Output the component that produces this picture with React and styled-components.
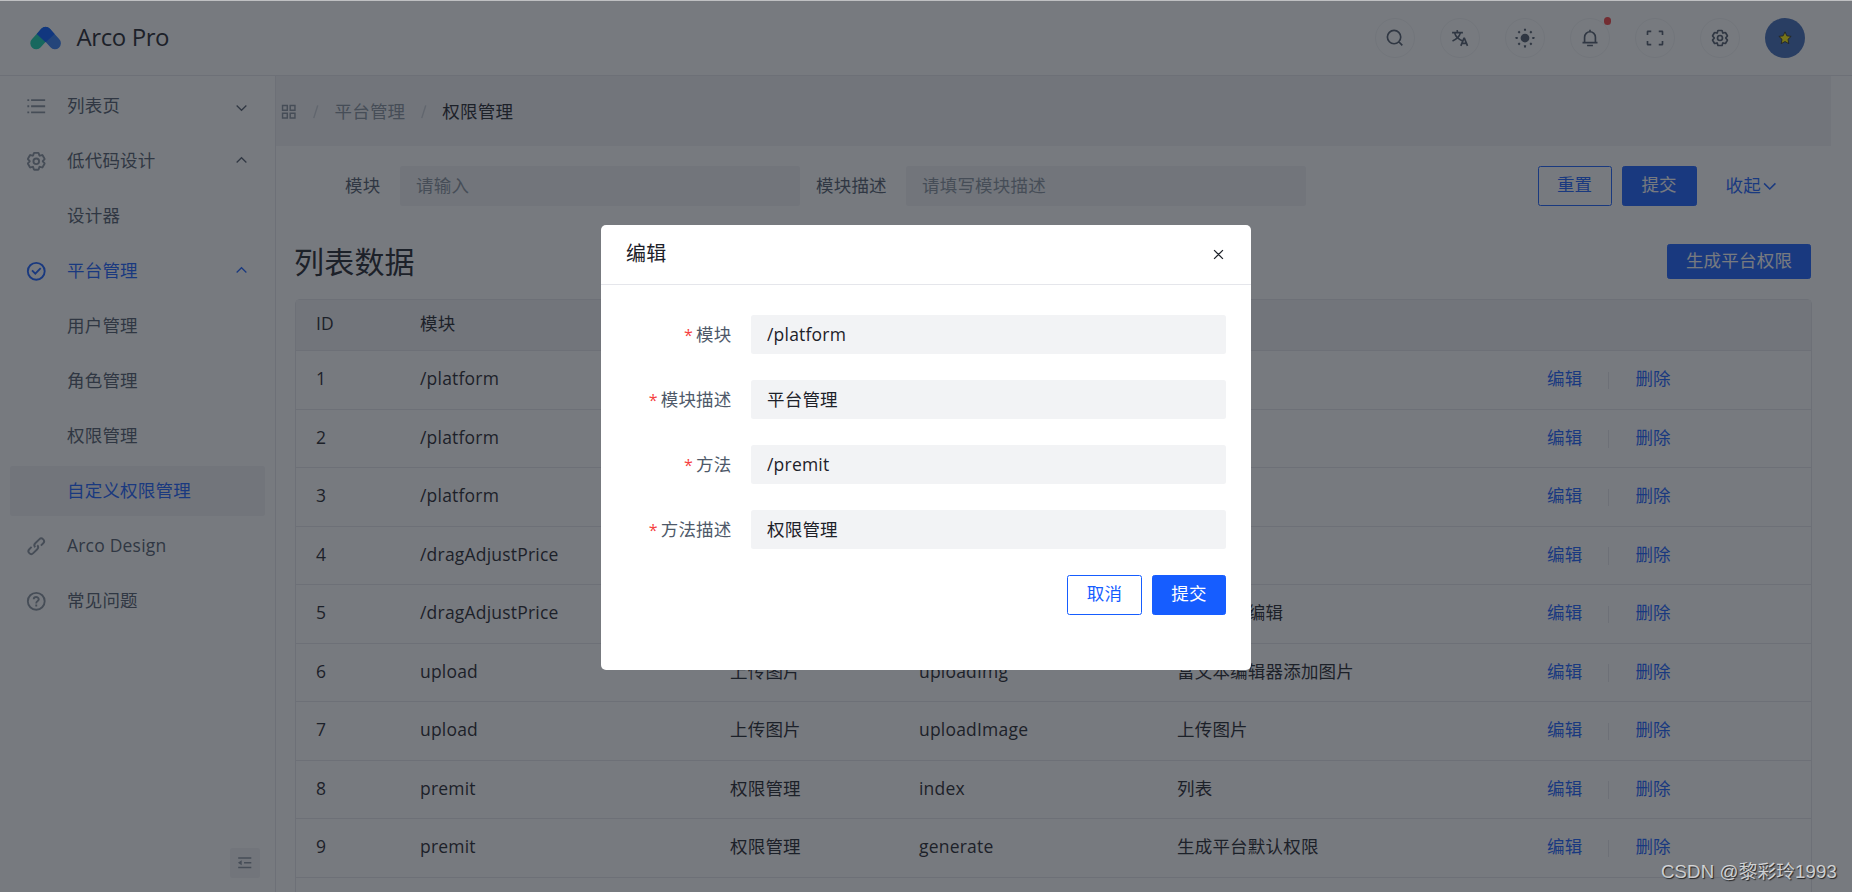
import React from "react";
import styled, { createGlobalStyle, css } from "styled-components";

const color = {
  primary: "#165dff",
  text1: "#1d2129",
  text2: "#4e5969",
  text3: "#86909c",
  text4: "#c9cdd4",
  border: "#e5e6eb",
  fill: "#f2f3f5",
  danger: "#f53f3f",
};

const GlobalStyle = createGlobalStyle`
  *, *::before, *::after { box-sizing: border-box; }
  html, body { margin: 0; padding: 0; overflow: hidden; }
  body, input, button {
    font-family: "Open Sans", "Noto Sans CJK SC", sans-serif;
    font-size: 17.5px;
    line-height: 27.5px;
    letter-spacing: 0.2px;
  }
  body { color: ${color.text1}; background: #fff; }
`;

/* ---------- icons ---------- */

const Svg = styled.svg`
  display: block;
  flex: none;
  width: ${(p) => p.$size}px;
  height: ${(p) => p.$size}px;
  fill: none;
  stroke: currentColor;
  stroke-width: 4;
`;

const circle = "M42 24c0 9.941-8.059 18-18 18S6 33.941 6 24 14.059 6 24 6s18 8.059 18 18Z";
const paths = {
  search: [
    "M33.072 33.071c6.248-6.248 6.248-16.379 0-22.627-6.249-6.249-16.38-6.249-22.628 0-6.248 6.248-6.248 16.379 0 22.627 6.248 6.248 16.38 6.248 22.628 0Zm0 0 8.485 8.485",
  ],
  language: [
    "m42 43-2.385-6M26 43l2.384-6m11.231 0-.795-2-4.18-10h-1.28l-4.181 10-.795 2m11.231 0h-11.23M17 5l1 5M5 11h26M11 11s1.889 7.826 6.611 12.174C22.333 27.522 30 31 30 31",
    "M25 11s-1.889 7.826-6.611 12.174C13.667 27.522 6 31 6 31",
  ],
  bell: ["M24 9c7.18 0 13 5.82 13 13v13H11V22c0-7.18 5.82-13 13-13Zm0 0V4M6 35h36m-25 7h14"],
  fullscreen: [
    "M42 17V9a1 1 0 0 0-1-1h-8M6 17V9a1 1 0 0 1 1-1h8m27 23v8a1 1 0 0 1-1 1h-8M6 31v8a1 1 0 0 0 1 1h8",
  ],
  settings: [
    "M18.797 6.732A1 1 0 0 1 19.76 6h8.48a1 1 0 0 1 .964.732l1.285 4.628a1 1 0 0 0 1.213.7l4.651-1.2a1 1 0 0 1 1.116.468l4.24 7.344a1 1 0 0 1-.153 1.2L38.193 23.3a1 1 0 0 0 0 1.402l3.364 3.427a1 1 0 0 1 .153 1.2l-4.24 7.344a1 1 0 0 1-1.116.468l-4.65-1.2a1 1 0 0 0-1.214.7l-1.285 4.628a1 1 0 0 1-.964.732h-8.48a1 1 0 0 1-.963-.732L17.51 36.64a1 1 0 0 0-1.213-.7l-4.65 1.2a1 1 0 0 1-1.116-.468l-4.24-7.344a1 1 0 0 1 .153-1.2L9.809 24.7a1 1 0 0 0 0-1.402l-3.364-3.427a1 1 0 0 1-.153-1.2l4.24-7.344a1 1 0 0 1 1.116-.468l4.65 1.2a1 1 0 0 0 1.213-.7l1.286-4.628Z",
    "M30 24a6 6 0 1 1-12 0 6 6 0 0 1 12 0Z",
  ],
  list: ["M13 24h30M5 11h4m4 26h30M13 11h30M5 24h4M5 37h4"],
  check: ["m15 22 7 7 11.5-11.5", circle],
  link: [
    "m14.1 25.414-4.95 4.95a6 6 0 0 0 8.486 8.485l8.485-8.485a6 6 0 0 0 0-8.485m7.779.707 4.95-4.95a6 6 0 1 0-8.486-8.485l-8.485 8.485a6 6 0 0 0 0 8.485",
  ],
  question: [
    circle,
    "M24.006 31v4.008m0-6.008L24 28c0-3 3-4 4.78-6.402C30.558 19.195 28.288 15 23.987 15c-4.014 0-5.382 2.548-5.388 4.514v.465",
  ],
  down: ["M39.6 17.443 24.043 33 8.487 17.443"],
  up: ["M39.6 30.557 24.043 15 8.487 30.557"],
  apps: ["M7 7h13v13H7V7ZM28 7h13v13H28V7ZM7 28h13v13H7V28ZM28 28h13v13H28V28Z"],
  slash: ["M29.506 6.502 18.493 41.498"],
  close: ["M9.857 9.858 24 24m0 0 14.142 14.142M24 24 38.142 9.858M24 24 9.857 38.142"],
  fold: ["M42 11H6M42 24H22M42 37H6"],
};

function Icon({ name, size }) {
  return (
    <Svg $size={size} viewBox="0 0 48 48" aria-hidden="true">
      {paths[name].map((d) => (
        <path key={d} d={d} />
      ))}
      {name === "fold" && (
        <path d="m13.66 26.912-4.82-3.118 4.82-3.118v6.236Z" fill="currentColor" />
      )}
    </Svg>
  );
}

function SunIcon() {
  return (
    <Svg $size={20} viewBox="0 0 48 48" aria-hidden="true">
      <g fill="currentColor" stroke="none">
        <circle cx="24" cy="24" r="10.5" />
        {[0, 45, 90, 135, 180, 225, 270, 315].map((a) => (
          <rect key={a} x="21.5" y="4.500" width="5" height="5" rx="0.5" transform={`rotate(${a} 24 24) translate(0 -3)`} />
        ))}
      </g>
    </Svg>
  );
}

const LogoSvg = styled.svg`
  display: block;
  width: 32px;
  height: 24px;
`;

function Logo() {
  return (
    <LogoSvg viewBox="0 0 32 24">
      <g fill="none" strokeLinecap="round" strokeWidth="12">
        <path d="M6.3 17.200 15.600 7" stroke="#12d2ac" />
        <path d="M24.900 17.200 15.600 7" stroke="#307af2" />
      </g>
      <path d="M6.700 7.900 11 3.100Q15.600-1.500 20.200 3.100L24.600 7.900 15.600 16.200Z" fill="#0057fe" />
    </LogoSvg>
  );
}

/* ---------- shell ---------- */

const Page = styled.div`
  position: relative;
  display: flex;
  flex-direction: column;
  width: 1852px;
  height: 892px;
  overflow: hidden;
`;

const Header = styled.header`
  display: flex;
  flex: none;
  align-items: center;
  justify-content: space-between;
  height: 76px;
  padding: 1px 47px 0 30px;
  border-bottom: 1px solid ${color.border};
`;

const Brand = styled.div`
  display: flex;
  align-items: center;
  gap: 14.5px;
  font-size: 24px;
  line-height: 30px;
  letter-spacing: -0.4px;
`;

const BrandName = styled.span`
  margin-top: -2px;
`;

const Actions = styled.div`
  display: flex;
  gap: 25px;
`;

const RoundButton = styled.button`
  position: relative;
  display: flex;
  align-items: center;
  justify-content: center;
  width: 40px;
  height: 40px;
  padding: 0;
  border: 1px solid ${color.fill};
  border-radius: 50%;
  background: transparent;
  color: ${color.text2};
`;

const Dot = styled.span`
  position: absolute;
  top: -2px;
  right: -2px;
  width: 7.5px;
  height: 7.5px;
  border-radius: 50%;
  background: ${color.danger};
`;

const Avatar = styled.div`
  display: flex;
  align-items: center;
  justify-content: center;
  width: 40px;
  height: 40px;
  border-radius: 50%;
  background: #3e6ab8;
`;

const Body = styled.div`
  display: flex;
  flex: 1;
  min-height: 0;
`;

const Sider = styled.aside`
  display: flex;
  flex: none;
  flex-direction: column;
  justify-content: space-between;
  width: 276px;
  padding: 5px 10px 14px;
  border-right: 1px solid ${color.border};
`;

const Menu = styled.nav`
  display: flex;
  flex-direction: column;
  gap: 5px;
`;

const MenuItem = styled.a`
  display: flex;
  align-items: center;
  height: 50px;
  padding: 0 15px;
  border-radius: 2.5px;
  color: ${(p) => (p.$active ? color.primary : color.text2)};
  ${(p) => p.$selected && css`background: ${color.fill};`}
`;

const MenuIcon = styled.span`
  width: 42px;
  color: ${(p) => (p.$active ? color.primary : color.text3)};
`;

const MenuLabel = styled.span`
  flex: 1;
`;

const MenuArrow = styled.span`
  margin-right: 1px;
  padding: ${(p) => (p.$up ? "0 0 2px" : "2px 0 0")};
`;

const FoldButton = styled.button`
  display: flex;
  align-self: flex-end;
  align-items: center;
  justify-content: center;
  width: 30px;
  height: 30px;
  margin-right: 5px;
  padding: 0;
  border: 0;
  border-radius: 2.5px;
  background: ${color.fill};
  color: ${color.text3};
`;

/* ---------- content ---------- */

const Main = styled.main`
  flex: 1;
  min-width: 0;
`;

const Breadcrumb = styled.div`
  display: flex;
  align-items: center;
  width: 1555px;
  height: 70px;
  padding: 2px 0 0 4px;
  background: ${color.fill};
  color: ${color.text3};
`;

const Separator = styled.span`
  display: flex;
  justify-content: center;
  width: ${(p) => p.$width}px;
  color: ${color.text4};
`;

const Current = styled.span`
  color: ${color.text1};
`;

const Content = styled.section`
  padding: 20px 41px 0 19px;
`;

const Filters = styled.form`
  display: flex;
  align-items: center;
  height: 40px;
  padding-left: 50px;
`;

const FilterLabel = styled.label`
  width: ${(p) => p.$width}px;
  color: ${color.text2};
`;

const Input = styled.input`
  flex: none;
  width: ${(p) => p.$width}px;
  height: ${(p) => p.$height}px;
  margin: 0 ${(p) => p.$gap || 0}px 0 0;
  padding: 0 15px 2px 16px;
  border: 0;
  border-radius: 2.5px;
  background: ${color.fill};
  color: ${color.text1};
  &::placeholder { color: ${color.text3}; opacity: 1; }
`;

const Button = styled.button`
  height: ${(p) => p.$height || 40}px;
  width: ${(p) => p.$width}px;
  padding: 0 0 2px;
  border: 1px solid ${color.primary};
  border-radius: 2.5px;
  white-space: nowrap;
  background: ${(p) => (p.$solid ? color.primary : "transparent")};
  color: ${(p) => (p.$solid ? "#fff" : color.primary)};
`;

const FilterActions = styled.div`
  display: flex;
  align-items: center;
  gap: 10px;
  margin-left: auto;
  padding-right: 32.5px;
`;

const Collapse = styled.a`
  display: flex;
  align-items: center;
  margin-left: 19px;
  color: ${color.primary};
`;

const TitleRow = styled.div`
  display: flex;
  align-items: flex-start;
  justify-content: space-between;
  height: 93px;
  padding-top: 38px;
`;

const Title = styled.h1`
  margin: -4px 0 0 -1px;
  font-size: 30px;
  font-weight: 400;
  line-height: 44px;
`;

const Table = styled.div`
  width: 1517px;
  border: 1px solid ${color.border};
  border-radius: 5px 5px 0 0;
`;

const Row = styled.div`
  display: grid;
  grid-template-columns: 104px 310px 189px 258px 370px 1fr;
  align-items: center;
  height: ${(p) => (p.$head ? 51 : 58.5)}px;
  padding: 0 0 2px 20px;
  border-bottom: 1px solid ${color.border};
  ${(p) => p.$head && css`background: ${color.fill};`}
`;

const RowActions = styled.span`
  display: flex;
  align-items: center;
  color: ${color.primary};
`;

const Divider = styled.i`
  width: 1px;
  height: 17.5px;
  margin: 3px 26px 0;
  background: ${color.border};
`;

/* ---------- dialog ---------- */

const Mask = styled.div`
  position: absolute;
  inset: 1px 0 0;
  background: rgba(29, 33, 41, 0.6);
`;

const TopEdge = styled.div`
  position: absolute;
  inset: 0 0 auto;
  height: 1px;
  background: #bfc0c2;
`;

const Dialog = styled.div`
  position: absolute;
  top: 224px;
  left: 601px;
  width: 650px;
  height: 445px;
  border-radius: 5px;
  background: #fff;
`;

const DialogHeader = styled.div`
  display: flex;
  align-items: center;
  justify-content: space-between;
  height: 60px;
  padding: 0 25px 1px;
  border-bottom: 1px solid ${color.border};
  font-size: 20px;
`;

const DialogForm = styled.form`
  display: flex;
  flex-direction: column;
  gap: 26px;
  padding: 30px 25px 0;
`;

const Field = styled.div`
  display: flex;
  align-items: center;
  height: 39px;
`;

const FieldLabel = styled.label`
  flex: 1;
  padding: 1px 19.5px 0 0;
  text-align: right;
  white-space: nowrap;
  color: ${color.text2};
`;

const Star = styled.span`
  margin-right: 3px;
  font-size: 16px;
  color: ${color.danger};
`;

const DialogActions = styled.div`
  display: flex;
  justify-content: flex-end;
  gap: 10px;
`;

const Watermark = styled.div`
  position: absolute;
  right: 15px;
  bottom: 6px;
  font-family: "Liberation Sans", "Noto Sans CJK SC", sans-serif;
  font-size: 18.7px;
  line-height: 28px;
  letter-spacing: 0.1px;
  white-space: nowrap;
  color: rgba(255, 255, 255, 0.72);
  text-shadow: 1px 1px 1px rgba(0, 0, 0, 0.7);
`;

/* ---------- data ---------- */

const menu = [
  { label: "列表页", icon: "list", arrow: "down" },
  { label: "低代码设计", icon: "settings", arrow: "up" },
  { label: "设计器" },
  { label: "平台管理", icon: "check", arrow: "up", active: true },
  { label: "用户管理" },
  { label: "角色管理" },
  { label: "权限管理" },
  { label: "自定义权限管理", active: true, selected: true },
  { label: "Arco Design", icon: "link" },
  { label: "常见问题", icon: "question" },
];

const rows = [
  ["1", "/platform", "", "", ""],
  ["2", "/platform", "", "", ""],
  ["3", "/platform", "", "", ""],
  ["4", "/dragAdjustPrice", "", "", ""],
  ["5", "/dragAdjustPrice", "", "", "拖拽调价编辑"],
  ["6", "upload", "上传图片", "uploadImg", "富文本编辑器添加图片"],
  ["7", "upload", "上传图片", "uploadImage", "上传图片"],
  ["8", "premit", "权限管理", "index", "列表"],
  ["9", "premit", "权限管理", "generate", "生成平台默认权限"],
  ["", "", "", "", ""],
];

const fields = [
  ["模块", "/platform"],
  ["模块描述", "平台管理"],
  ["方法", "/premit"],
  ["方法描述", "权限管理"],
];

export default function App() {
  return (
    <Page>
      <GlobalStyle />
      <Header>
        <Brand>
          <Logo />
          <BrandName>Arco Pro</BrandName>
        </Brand>
        <Actions>
          <RoundButton><Icon name="search" size={20} /></RoundButton>
          <RoundButton><Icon name="language" size={20} /></RoundButton>
          <RoundButton><SunIcon /></RoundButton>
          <RoundButton>
            <Icon name="bell" size={20} />
            <Dot />
          </RoundButton>
          <RoundButton><Icon name="fullscreen" size={20} /></RoundButton>
          <RoundButton><Icon name="settings" size={20} /></RoundButton>
          <Avatar>
            <svg width="14" height="14" viewBox="0 0 24 24">
              <path
                d="m12 1.5 3.200 6.800 7.300.9-5.400 5.100 1.400 7.400-6.500-3.600-6.500 3.600 1.400-7.400L1.500 9.200l7.300-.9Z"
                fill="#fff200"
                stroke="#222"
                strokeWidth="1.5"
              />
            </svg>
          </Avatar>
        </Actions>
      </Header>

      <Body>
        <Sider>
          <Menu>
            {menu.map((m) => (
              <MenuItem key={m.label} $active={m.active} $selected={m.selected}>
                <MenuIcon $active={m.active}>{m.icon && <Icon name={m.icon} size={22.5} />}</MenuIcon>
                <MenuLabel>{m.label}</MenuLabel>
                {m.arrow && (
                  <MenuArrow $up={m.arrow === "up"}><Icon name={m.arrow} size={15} /></MenuArrow>
                )}
              </MenuItem>
            ))}
          </Menu>
          <FoldButton><Icon name="fold" size={17.5} /></FoldButton>
        </Sider>

        <Main>
          <Breadcrumb>
            <Icon name="apps" size={17.5} />
            <Separator $width={37}><Icon name="slash" size={17.5} /></Separator>
            <span>平台管理</span>
            <Separator $width={37}><Icon name="slash" size={17.5} /></Separator>
            <Current>权限管理</Current>
          </Breadcrumb>

          <Content>
            <Filters>
              <FilterLabel $width={55}>模块</FilterLabel>
              <Input $width={400} $height={40} $gap={16} placeholder="请输入" />
              <FilterLabel $width={90}>模块描述</FilterLabel>
              <Input $width={400} $height={40} placeholder="请填写模块描述" />
              <FilterActions>
                <Button type="button" $width={74}>重置</Button>
                <Button type="button" $width={75} $solid>提交</Button>
                <Collapse>收起<Icon name="down" size={17.5} /></Collapse>
              </FilterActions>
            </Filters>

            <TitleRow>
              <Title>列表数据</Title>
              <Button $solid $width={144} $height={35}>生成平台权限</Button>
            </TitleRow>

            <Table>
              <Row $head>
                <span>ID</span>
                <span>模块</span>
              </Row>
              {rows.map(([id, ...cells], i) => (
                <Row key={i}>
                  <span>{id}</span>
                  {cells.map((c, j) => <span key={j}>{c}</span>)}
                  {id && (
                    <RowActions>
                      编辑<Divider />删除
                    </RowActions>
                  )}
                </Row>
              ))}
            </Table>
          </Content>
        </Main>
      </Body>

      <TopEdge />
      <Mask>
        <Dialog role="dialog">
          <DialogHeader>
            编辑
            <Icon name="close" size={15} />
          </DialogHeader>
          <DialogForm>
            {fields.map(([label, value]) => (
              <Field key={label}>
                <FieldLabel><Star>*</Star>{label}</FieldLabel>
                <Input $width={475} $height={39} defaultValue={value} />
              </Field>
            ))}
            <DialogActions>
              <Button type="button" $width={75}>取消</Button>
              <Button type="button" $width={74} $solid>提交</Button>
            </DialogActions>
          </DialogForm>
        </Dialog>
      </Mask>
      <Watermark>CSDN @黎彩玲1993</Watermark>
    </Page>
  );
}
